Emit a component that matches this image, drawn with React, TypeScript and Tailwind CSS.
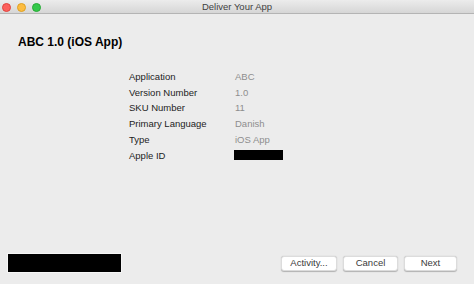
import React from "react";

const rows: { label: string; value?: string }[] = [
  { label: "Application", value: "ABC" },
  { label: "Version Number", value: "1.0" },
  { label: "SKU Number", value: "11" },
  { label: "Primary Language", value: "Danish" },
  { label: "Type", value: "iOS App" },
  { label: "Apple ID" },
];

const font = { fontFamily: '"Liberation Sans", Arial, sans-serif' };

const Button: React.FC<{ label: string; width: string }> = ({ label, width }) => (
  <button
    className={`${width} h-[15px] rounded-[3px] bg-white text-[9.5px] leading-none text-[#3a3a3a] shadow-[0_0.5px_1px_rgba(0,0,0,0.25)] border border-[#dcdcdc]`}
  >
    {label}
  </button>
);

export default function App() {
  return (
    <div className="w-[474px] h-[284px] flex flex-col bg-[#ececec] overflow-hidden" style={font}>
      {/* title bar */}
      <div className="relative h-[14px] flex items-center justify-center bg-gradient-to-b from-[#ececec] to-[#d6d6d6] border-b border-[#b4b4b4]">
        <div className="absolute left-[2px] top-[2.5px] flex gap-[6px]">
          <span className="w-[9px] h-[9px] rounded-full bg-[#fc605c] border border-[#e0443e]" />
          <span className="w-[9px] h-[9px] rounded-full bg-[#fdbc40] border border-[#dea123]" />
          <span className="w-[9px] h-[9px] rounded-full bg-[#34c84a] border border-[#27aa35]" />
        </div>
        <span className="text-[9.5px] leading-none text-[#3f3f3f]">Deliver Your App</span>
      </div>

      <div className="pl-[18px] pt-[21px]">
        <h1 className="text-[12px] leading-[14px] font-bold text-black">ABC 1.0 (iOS App)</h1>
        <div className="ml-[111px] mt-[20px] grid grid-cols-[106px_auto]">
          {rows.map((r) => (
            <React.Fragment key={r.label}>
              <div className="h-[15.8px] flex items-center text-[9.5px] text-[#1c1c1c]">{r.label}</div>
              <div className="h-[15.8px] flex items-center text-[9.5px] text-[#8e8e8e]">
                {r.value ?? <span className="block w-[49px] h-[10px] bg-black -ml-[1px] -mt-[2px]" />}
              </div>
            </React.Fragment>
          ))}
        </div>
      </div>

      <div className="flex-1" />

      <div className="flex items-center justify-between pl-[7px] pr-[17px] pb-[11px]">
        <div className="w-[115px] h-[20px] bg-black border border-[#f6f6f6]" />
        <div className="flex gap-[6px]">
          <Button label="Activity..." width="w-[56px]" />
          <Button label="Cancel" width="w-[55px]" />
          <Button label="Next" width="w-[53px]" />
        </div>
      </div>
    </div>
  );
}
